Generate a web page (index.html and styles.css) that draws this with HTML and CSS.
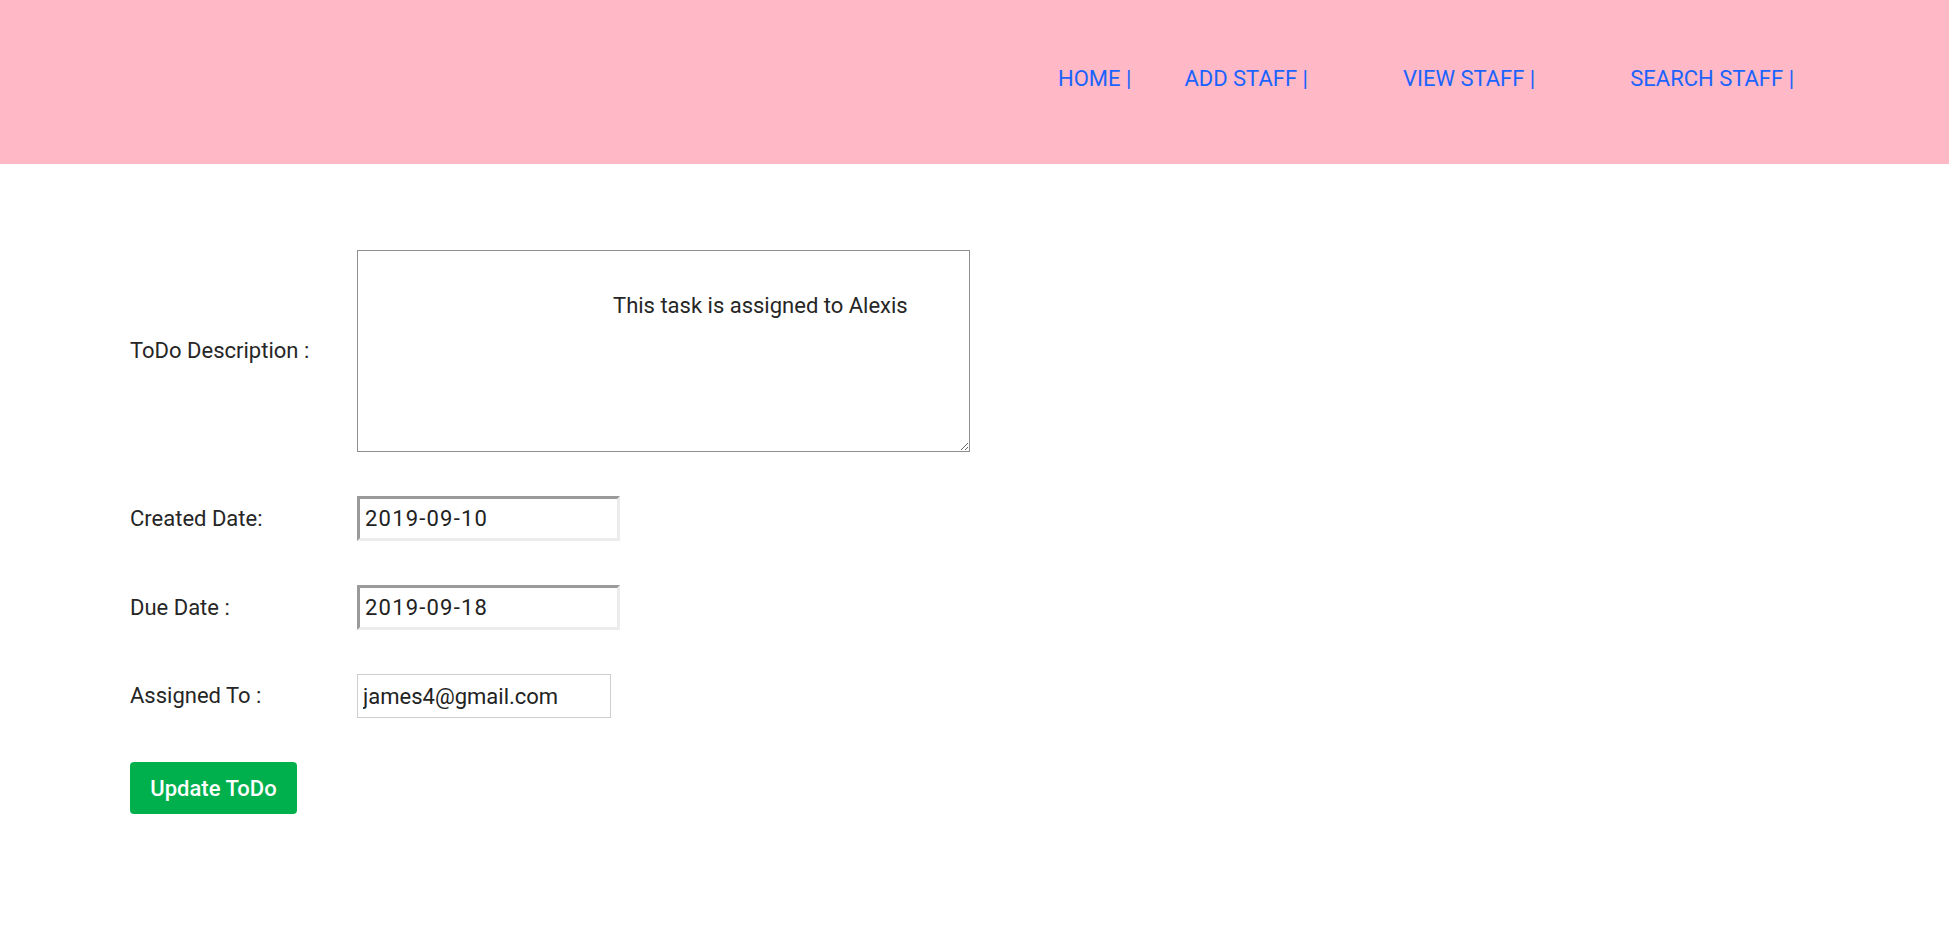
FILE: index.html
```html
<!DOCTYPE html>
<html lang="en">
<head>
<meta charset="utf-8">
<title>Update ToDo</title>
<link rel="stylesheet" href="styles.css">
</head>
<body>
<header class="topbar">
  <nav class="nav">
    <a class="nav-link" href="#">HOME |</a>
    <a class="nav-link nav-add" href="#">ADD STAFF |</a>
    <a class="nav-link nav-wide" href="#">VIEW STAFF |</a>
    <a class="nav-link nav-wide" href="#">SEARCH STAFF |</a>
  </nav>
</header>
<main class="content">
  <form class="todo-form">
    <label class="field-label" for="desc">ToDo Description :</label>
    <textarea id="desc" class="desc-box">This task is assigned to Alexis</textarea>

    <label class="field-label" for="created">Created Date:</label>
    <input id="created" class="date-box" type="text" value="2019-09-10">

    <label class="field-label" for="due">Due Date :</label>
    <input id="due" class="date-box" type="text" value="2019-09-18">

    <label class="field-label" for="assigned">Assigned To :</label>
    <input id="assigned" class="text-box" type="text" value="james4@gmail.com">

    <button class="submit-btn" type="button">Update ToDo</button>
  </form>
</main>
</body>
</html>
```

FILE: styles.css
```css
html, body {
  margin: 0;
  padding: 0;
  background: #ffffff;
  font-family: Roboto, "Liberation Sans", Arial, sans-serif;
  color: #222222;
}

.topbar {
  height: 164px;
  background: #ffb8c6;
  box-sizing: border-box;
  padding-top: 64px;
}

.nav {
  display: flex;
  align-items: center;
  padding-left: 1058px;
}

.nav-link {
  font-size: 22px;
  line-height: 30px;
  color: #1a63ff;
  text-decoration: none;
  white-space: nowrap;
}

.nav-add {
  margin-left: 53px;
}

.nav-wide {
  margin-left: 95px;
}

.content {
  padding: 86px 0 0 130px;
}

.todo-form {
  display: grid;
  grid-template-columns: 227px auto;
  row-gap: 44px;
  align-items: center;
  justify-items: start;
}

.field-label {
  font-size: 22px;
  line-height: 26px;
  color: #262626;
}

.desc-box {
  box-sizing: border-box;
  width: 613px;
  height: 202px;
  border: 1px solid #8e8e8e;
  padding: 43px 10px 0 255px;
  font-family: Roboto, "Liberation Sans", Arial, sans-serif;
  font-size: 22px;
  line-height: 24px;
  color: #262626;
  background: #ffffff;
  resize: both;
  outline: none;
}

.date-box {
  box-sizing: border-box;
  width: 263px;
  height: 45px;
  border-style: solid;
  border-width: 3px;
  border-color: #9a9a9a #ececec #ececec #9a9a9a;
  padding: 0 0 0 5px;
  font-family: Roboto, "Liberation Sans", Arial, sans-serif;
  font-size: 22px;
  letter-spacing: 1.2px;
  color: #222222;
  background: #ffffff;
  outline: none;
}

.text-box {
  box-sizing: border-box;
  width: 254px;
  height: 44px;
  border: 1px solid #cfcfcf;
  padding: 0 0 0 5px;
  font-family: Roboto, "Liberation Sans", Arial, sans-serif;
  font-size: 22px;
  color: #222222;
  background: #ffffff;
  outline: none;
}

.submit-btn {
  grid-column: 1 / 2;
  box-sizing: border-box;
  width: 167px;
  height: 52px;
  border: none;
  border-radius: 4px;
  background: #00b04c;
  color: #ffffff;
  font-family: Roboto, "Liberation Sans", Arial, sans-serif;
  font-size: 22px;
  font-weight: 500;
  padding: 0;
  cursor: pointer;
}
```
